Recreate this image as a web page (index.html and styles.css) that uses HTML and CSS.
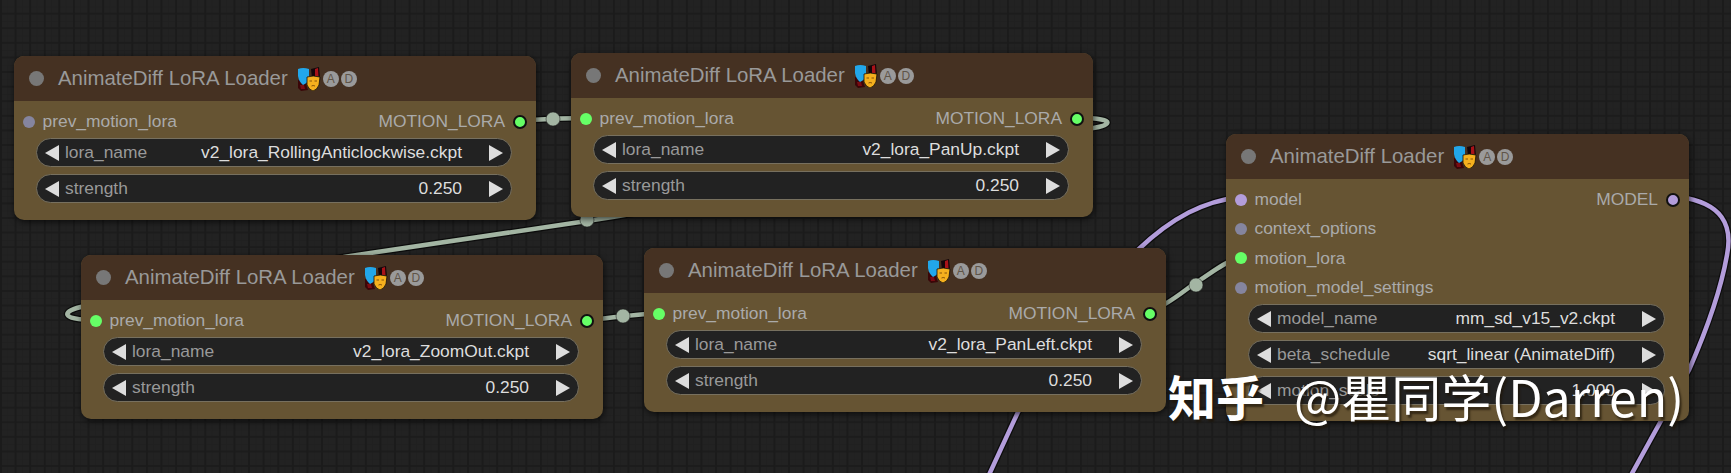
FILE: index.html
```html
<!DOCTYPE html>
<html>
<head>
    <title>AnimateDiff Workflow</title>
    <link rel="stylesheet" href="styles.css">
</head>
<body>
    <svg width="0" height="0" class="defs">
        <symbol id="masks" viewBox="0 0 24 24">
            <path d="M1 13 L8 14 L11 23 L4 24 L1 21 Z" fill="#3a0608"/>
            <path d="M14 2 L22 0 L23 11 L15 11 Z" fill="#14060a"/>
            <path d="M18 2 L21 1 L21.5 9 L18 9 Z" fill="#a81218"/>
            <path d="M1 2 Q6 0 12 2 L12 11 Q11 16 6 18 Q2 15 1 9 Z" fill="#22a7ea"/>
            <path d="M3 18 L7 18 L8 22 L4 22 Z" fill="#7a0c12"/>
            <path d="M10 10 Q16 8 23 10 L22 18 Q20 23 16 24 Q12 23 10 18 Z" fill="#f5b01e" stroke="#14100a" stroke-width="0.8"/>
            <path d="M12.5 14 L15 14 M17.5 14 L20 14 M14.5 19 Q16 18 18 19" stroke="#7a4a08" stroke-width="0.9" fill="none"/>
        </symbol>
    </svg>

    <div class="canvas">
        <!-- links sit under the nodes -->
        <svg class="links" width="1731" height="473" viewBox="0 0 1731 473" fill="none">
            <g class="link-shadow">
                <path d="M530 120 C 545 119, 560 118, 590 118"/>
                <path d="M1078 118 C 1122 118, 1110 127, 1085 129 C 900 150, 760 195, 587 221 L 357 255 C 230 275, 140 295, 85 306 C 60 311, 60 320, 95 320"/>
                <path d="M588 320 C 610 318, 630 315, 658 313"/>
                <path d="M1148 312 C 1170 305, 1190 285, 1200 280 C 1215 270, 1225 262, 1240 257"/>
                <path d="M1240 197 C 1170 205, 1110 260, 1018 412 L 988 477"/>
                <path d="M1680 197 C 1722 203, 1733 225, 1727 255 C 1720 295, 1700 345, 1689 370 L 1630 477"/>
            </g>
            <g class="link-green">
                <path d="M530 120 C 545 119, 560 118, 590 118"/>
                <path d="M1078 118 C 1122 118, 1110 127, 1085 129 C 900 150, 760 195, 587 221 L 357 255 C 230 275, 140 295, 85 306 C 60 311, 60 320, 95 320"/>
                <path d="M588 320 C 610 318, 630 315, 658 313"/>
                <path d="M1148 312 C 1170 305, 1190 285, 1200 280 C 1215 270, 1225 262, 1240 257"/>
                <circle cx="553" cy="119" r="7"/>
                <circle cx="587" cy="220" r="7"/>
                <circle cx="623" cy="316" r="7"/>
                <circle cx="1196" cy="285" r="7"/>
            </g>
            <g class="link-purple">
                <path d="M1240 197 C 1170 205, 1110 260, 1018 412 L 988 477"/>
                <path d="M1680 197 C 1722 203, 1733 225, 1727 255 C 1720 295, 1700 345, 1689 370 L 1630 477"/>
            </g>
        </svg>

        <div class="node node-a">
            <div class="node-title">
                <span class="title-dot"></span>
                <span class="title-text">AnimateDiff LoRA Loader</span>
                <svg class="masks"><use href="#masks"/></svg>
                <span class="badge">A</span><span class="badge">D</span>
            </div>
            <div class="slots">
                <div class="slot-row">
                    <div class="slot"><span class="dot gray"></span>prev_motion_lora</div>
                    <div class="slot">MOTION_LORA<span class="dot green linked"></span></div>
                </div>
            </div>
            <div class="widgets">
                <div class="widget"><span class="arrow-left"></span><span class="w-label">lora_name</span><span class="w-value">v2_lora_RollingAnticlockwise.ckpt</span><span class="arrow-right"></span></div>
                <div class="widget"><span class="arrow-left"></span><span class="w-label">strength</span><span class="w-value">0.250</span><span class="arrow-right"></span></div>
            </div>
        </div>

        <div class="node node-b">
            <div class="node-title">
                <span class="title-dot"></span>
                <span class="title-text">AnimateDiff LoRA Loader</span>
                <svg class="masks"><use href="#masks"/></svg>
                <span class="badge">A</span><span class="badge">D</span>
            </div>
            <div class="slots">
                <div class="slot-row">
                    <div class="slot"><span class="dot green"></span>prev_motion_lora</div>
                    <div class="slot">MOTION_LORA<span class="dot green linked"></span></div>
                </div>
            </div>
            <div class="widgets">
                <div class="widget"><span class="arrow-left"></span><span class="w-label">lora_name</span><span class="w-value">v2_lora_PanUp.ckpt</span><span class="arrow-right"></span></div>
                <div class="widget"><span class="arrow-left"></span><span class="w-label">strength</span><span class="w-value">0.250</span><span class="arrow-right"></span></div>
            </div>
        </div>

        <div class="node node-c">
            <div class="node-title">
                <span class="title-dot"></span>
                <span class="title-text">AnimateDiff LoRA Loader</span>
                <svg class="masks"><use href="#masks"/></svg>
                <span class="badge">A</span><span class="badge">D</span>
            </div>
            <div class="slots">
                <div class="slot-row">
                    <div class="slot"><span class="dot green"></span>prev_motion_lora</div>
                    <div class="slot">MOTION_LORA<span class="dot green linked"></span></div>
                </div>
            </div>
            <div class="widgets">
                <div class="widget"><span class="arrow-left"></span><span class="w-label">lora_name</span><span class="w-value">v2_lora_ZoomOut.ckpt</span><span class="arrow-right"></span></div>
                <div class="widget"><span class="arrow-left"></span><span class="w-label">strength</span><span class="w-value">0.250</span><span class="arrow-right"></span></div>
            </div>
        </div>

        <div class="node node-d">
            <div class="node-title">
                <span class="title-dot"></span>
                <span class="title-text">AnimateDiff LoRA Loader</span>
                <svg class="masks"><use href="#masks"/></svg>
                <span class="badge">A</span><span class="badge">D</span>
            </div>
            <div class="slots">
                <div class="slot-row">
                    <div class="slot"><span class="dot green"></span>prev_motion_lora</div>
                    <div class="slot">MOTION_LORA<span class="dot green linked"></span></div>
                </div>
            </div>
            <div class="widgets">
                <div class="widget"><span class="arrow-left"></span><span class="w-label">lora_name</span><span class="w-value">v2_lora_PanLeft.ckpt</span><span class="arrow-right"></span></div>
                <div class="widget"><span class="arrow-left"></span><span class="w-label">strength</span><span class="w-value">0.250</span><span class="arrow-right"></span></div>
            </div>
        </div>

        <div class="node node-e">
            <div class="node-title">
                <span class="title-dot"></span>
                <span class="title-text">AnimateDiff Loader</span>
                <svg class="masks"><use href="#masks"/></svg>
                <span class="badge">A</span><span class="badge">D</span>
            </div>
            <div class="slots">
                <div class="slot-row">
                    <div class="slot"><span class="dot purple"></span>model</div>
                    <div class="slot">MODEL<span class="dot purple linked"></span></div>
                </div>
                <div class="slot-row">
                    <div class="slot"><span class="dot gray"></span>context_options</div>
                </div>
                <div class="slot-row">
                    <div class="slot"><span class="dot green"></span>motion_lora</div>
                </div>
                <div class="slot-row">
                    <div class="slot"><span class="dot gray"></span>motion_model_settings</div>
                </div>
            </div>
            <div class="widgets">
                <div class="widget"><span class="arrow-left"></span><span class="w-label">model_name</span><span class="w-value">mm_sd_v15_v2.ckpt</span><span class="arrow-right"></span></div>
                <div class="widget"><span class="arrow-left"></span><span class="w-label">beta_schedule</span><span class="w-value">sqrt_linear (AnimateDiff)</span><span class="arrow-right"></span></div>
                <div class="widget"><span class="arrow-left"></span><span class="w-label">motion_scale</span><span class="w-value">1.000</span><span class="arrow-right"></span></div>
            </div>
        </div>

        <div class="watermark"><span class="wm-logo">知乎</span><span>@瞿同学(Darren)</span></div>
    </div>
</body>
</html>
```

FILE: styles.css
```css
body {
    margin: 0;
    background-color: #222;
    font-family: "Liberation Sans", Arial, sans-serif;
    overflow: hidden;
}
.defs {
    position: absolute;
}
.canvas {
    position: relative;
    width: 1731px;
    height: 473px;
    overflow: hidden;
    background-color: #222;
    background-image:
        linear-gradient(90deg, #1b1b1b 1.5px, transparent 1.5px),
        linear-gradient(0deg, #1c1c1c 1.5px, transparent 1.5px),
        linear-gradient(90deg, #202020 1px, transparent 1px),
        linear-gradient(0deg, #202020 1px, transparent 1px);
    background-size: 14.6px 14.6px, 14.6px 14.6px, 7.3px 7.3px, 7.3px 7.3px;
}

/* links */
.links {
    position: absolute;
    left: 0;
    top: 0;
}
.link-shadow path {
    stroke: #0c0c0c;
    stroke-width: 7;
}
.link-green path {
    stroke: #a3b5a3;
    stroke-width: 4.5;
}
.link-green circle {
    fill: #a3b5a3;
    stroke: #141414;
    stroke-width: 0.5;
}
.link-purple path {
    stroke: #b39ddb;
    stroke-width: 4.5;
}

/* nodes */
.node {
    position: absolute;
    width: 522px;
    height: 164px;
    background-color: #665433;
    border-radius: 10px;
    box-shadow: 1px 2px 6px rgba(0, 0, 0, 0.65);
    color: #aaa;
    font-size: 17.4px;
}
.node-a { left: 14px; top: 56px; }
.node-b { left: 571px; top: 53px; }
.node-c { left: 81px; top: 255px; }
.node-d { left: 644px; top: 248px; }
.node-e { left: 1226px; top: 134px; width: 463px; height: 287px; }

.node-title {
    display: flex;
    align-items: center;
    height: 45px;
    padding-left: 15px;
    background-color: #453122;
    border-radius: 10px 10px 0 0;
    box-sizing: border-box;
    color: #999;
    font-size: 20.4px;
}
.title-dot {
    width: 15px;
    height: 15px;
    margin-right: 14px;
    border-radius: 50%;
    background-color: #777;
}
.masks {
    width: 24px;
    height: 24px;
    margin: 0 2px 0 9px;
}
.badge {
    display: flex;
    align-items: center;
    justify-content: center;
    width: 16px;
    height: 16px;
    margin-right: 2px;
    border-radius: 50%;
    background-color: #9a9a9a;
    color: #5f5448;
    font-size: 12px;
}

/* slots */
.slots {
    display: flex;
    flex-direction: column;
    padding-top: 6px;
}
.slot-row {
    display: flex;
    justify-content: space-between;
    align-items: center;
    height: 29.3px;
    padding: 0 9px 0 8.5px;
}
.slot {
    display: flex;
    align-items: center;
    gap: 8px;
}
.dot {
    width: 12px;
    height: 12px;
    border-radius: 50%;
    box-sizing: border-box;
}
.dot.gray { background-color: #85859f; }
.dot.green { background-color: #66ff66; }
.dot.purple { background-color: #b39ddb; }
.dot.linked {
    width: 14px;
    height: 14px;
    border: 2px solid #111;
}

/* widgets */
.widgets {
    display: flex;
    flex-direction: column;
    gap: 6.5px;
    margin: 1.7px 24px 0 22px;
}
.widget {
    display: flex;
    align-items: center;
    height: 29.5px;
    box-sizing: border-box;
    padding: 0 8px;
    background-color: #222;
    border: 1.5px solid #77705f;
    border-radius: 15px;
}
.arrow-left {
    width: 0;
    height: 0;
    border-top: 8px solid transparent;
    border-bottom: 8px solid transparent;
    border-right: 14px solid #ddd;
}
.arrow-right {
    width: 0;
    height: 0;
    border-top: 8px solid transparent;
    border-bottom: 8px solid transparent;
    border-left: 14px solid #ddd;
}
.w-label {
    margin-left: 6px;
    color: #999;
}
.w-value {
    flex: 1;
    text-align: right;
    margin-right: 27px;
    color: #ddd;
    white-space: nowrap;
}

.watermark {
    position: absolute;
    left: 1168px;
    top: 360px;
    display: flex;
    align-items: center;
    gap: 30px;
    color: #fff;
    font-family: "Noto Sans CJK SC", "Noto Sans", sans-serif;
    font-size: 50px;
    line-height: 70px;
    white-space: nowrap;
    text-shadow: 2px 3px 2px rgba(30, 22, 8, 0.7);
}
.wm-logo {
    font-size: 48px;
    font-weight: 700;
}
```
